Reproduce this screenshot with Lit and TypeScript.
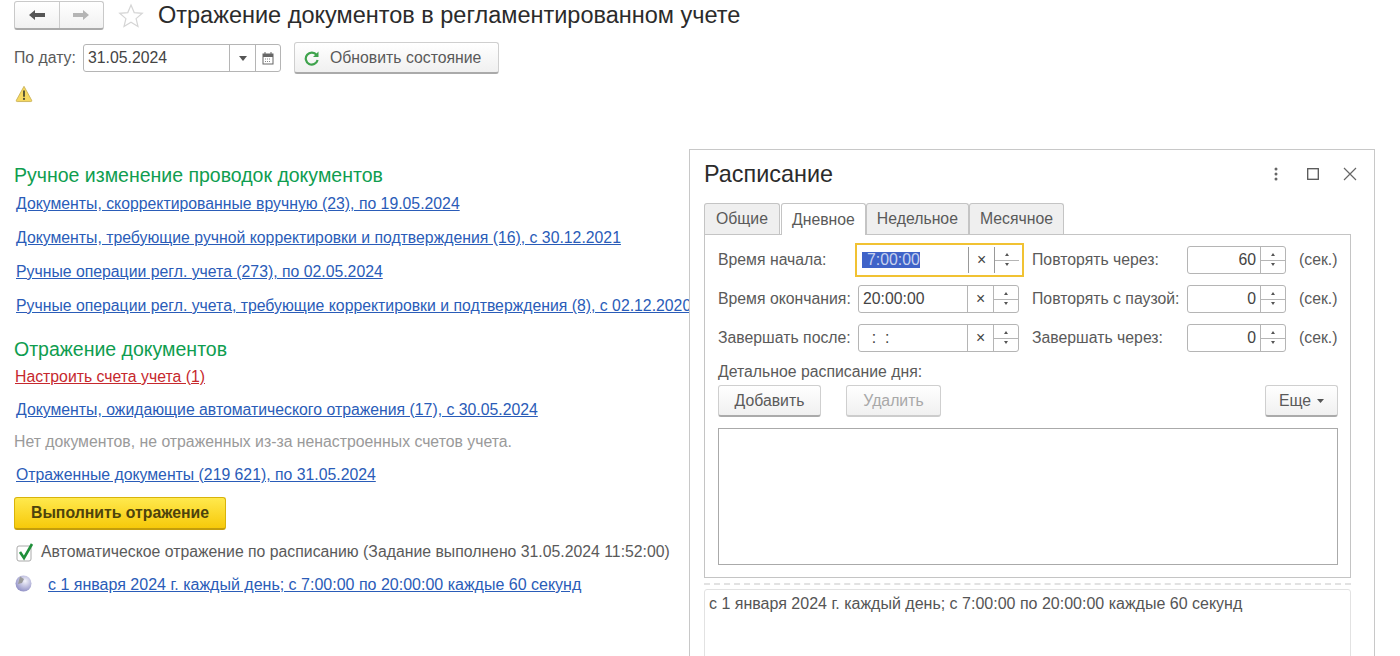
import { LitElement, html, css } from "lit";
import { customElement } from "lit/decorators.js";

const spin = html`<span class="spin"><svg width="8" height="7" viewBox="0 0 8 7"><path d="M4 1 6 4H2z" fill="#555"/></svg><svg width="8" height="7" viewBox="0 0 8 7"><path d="M2 3h4L4 6z" fill="#555"/></svg></span>`;

@customElement("app-root")
export class AppRoot extends LitElement {
  static styles = css`
    :host { display: block; position: relative; width: 1400px; height: 656px; overflow: hidden; background: #fff; font-family: "Liberation Sans", Arial, sans-serif; font-size: 15.8px; color: #5a5a5a; }
    * { box-sizing: border-box; }
    .page { padding: 1px 0 0 14px; display: flex; flex-direction: column; align-items: flex-start; white-space: nowrap; }
    .top { display: flex; align-items: center; height: 29px; }
    .nav { display: flex; width: 90px; height: 29px; border: 1px solid #c9c9c9; border-bottom: 2px solid #aaa; border-radius: 3px; background: linear-gradient(#fff, #f1f1f1); }
    .nav span { flex: 1; display: flex; align-items: center; justify-content: center; }
    .nav span + span { border-left: 1px solid #ccc; }
    .star { margin-left: 13px; display: flex; }
    h1 { margin: 0 0 0 13px; font-weight: 400; font-size: 23.5px; color: #2b2b2b; line-height: 29px; }
    .daterow { display: flex; align-items: center; margin-top: 13px; height: 30px; }
    .daterow label { width: 69px; }
    .input { display: flex; align-items: stretch; height: 28px; border: 1px solid #b5b5b5; border-radius: 3px; background: #fff; color: #444; }
    .date { width: 198px; }
    .date .val { flex: 1; padding-left: 4px; display: flex; align-items: center; }
    .cell { display: flex; align-items: center; justify-content: center; border-left: 1px solid #b5b5b5; }
    .c25 { width: 25px; }
    .c26 { width: 26px; }
    .btn { display: inline-flex; align-items: center; justify-content: center; height: 32px; border: 1px solid #cfcfcf; border-bottom: 2px solid #aaa; border-radius: 3px; background: linear-gradient(#fff, #f0f0f0); color: #5a5a5a; }
    .refresh { width: 205px; margin-left: 13px; gap: 10px; padding-left: 9px; justify-content: flex-start; }
    .warn { display: flex; margin: 12px 0 0 1px; height: 20px; }
    h2 { margin: 0; font-weight: 400; font-size: 19.5px; line-height: 22px; color: #0f9d4f; }
    .h1st { margin-top: 59px; }
    .h2nd { margin-top: 22px; }
    a { color: #2a5cb8; text-decoration: underline; display: block; line-height: 20px; margin-left: 2px; }
    .l1 { margin-top: 8px; }
    .l { margin-top: 14px; }
    .red { color: #c6282d; margin-top: 7px; margin-left: 1px; }
    .l2 { margin-top: 13px; }
    .none { color: #9a9a9a; line-height: 20px; margin-top: 12px; }
    .yellow { width: 212px; height: 33px; margin-top: 12px; background: linear-gradient(#ffe94d, #f7c90a); border: 1px solid #d8b30a; border-bottom: 2px solid #c49d0c; color: #4d430c; font-weight: 700; }
    .check { display: flex; align-items: center; margin: 12px 0 0 2px; gap: 6px; line-height: 20px; }
    .box { width: 19px; height: 19px; display: flex; }
    .sched { display: flex; align-items: center; margin: 13px 0 0 1px; gap: 16px; }
    .sched a { margin: 0; font-size: 16px; }
    .globe { margin-top: -4px; }
    .dlg { position: absolute; left: 689px; top: 149px; width: 686px; height: 520px; border: 1px solid #c8c8c8; background: #fff; padding: 0 24px 0 14px; }
    .head { display: flex; align-items: center; height: 47px; padding-top: 1px; margin-right: -18px; }
    .head .t { font-size: 23.4px; color: #2b2b2b; flex: 1; }
    .head .ic { display: flex; width: 37px; justify-content: center; }
    .tabs { display: flex; margin-top: 6px; height: 31px; align-items: flex-end; position: relative; z-index: 1; }
    .tab { height: 31px; padding: 0 10px; display: flex; align-items: center; background: #efefef; border: 1px solid #c4c4c4; border-bottom: none; border-radius: 3px 3px 0 0; color: #5a5a5a; }
    .tab:first-child { padding: 0 11px; }
    .tab.on { background: #fff; height: 32px; margin-bottom: -1px; margin-left: 1px; }
    .panel { height: 344px; width: 647px; border: 1px solid #c4c4c4; padding: 0 12px 0 13px; }
    .grid { display: grid; grid-template-columns: 140px 174px 155px 111px 40px; grid-template-rows: 39px 39px 39px; padding-top: 5px; align-items: center; height: 121px; }
    .grid > label { white-space: nowrap; }
    .unit { padding-left: 1px; }
    .time { width: 161px; height: 28px; }
    .time .val { flex: 1; padding-left: 4px; display: flex; align-items: center; }
    .focus { border: 2px solid #f1c232; width: 169px; height: 34px; margin-left: -3px; padding: 2px 3px 2px 0; background: #fff; display: flex; color: #444; }
    .focus .val { flex: 1; display: flex; align-items: center; padding-left: 5px; }
    .focus .val span { background: #3f63c8; color: #c8d2ee; padding: 0 0 0 5px; line-height: 16px; }
    .focus .cell { border-color: #999; }
    .num { width: 99px; height: 28px; }
    .num .val { flex: 1; display: flex; align-items: center; justify-content: flex-end; padding-right: 4px; }
    .spin { display: flex; flex-direction: column; width: 100%; height: 100%; justify-content: center; align-items: center; position: relative; gap: 1px; }
    .spin::after { content: ""; position: absolute; left: 0; right: 0; top: 50%; border-top: 1px solid #b5b5b5; }
    .detail { line-height: 20px; margin-top: 6px; }
    .bar { display: flex; margin-top: 3px; gap: 25px; }
    .add { width: 103px; }
    .del { width: 95px; color: #a8a8a8; border-bottom-color: #ccc; }
    .more { width: 73px; margin-left: auto; gap: 6px; }
    .list { height: 137px; margin-top: 11px; border: 1px solid #aaa; }
    .dash { width: 647px; border-top: 2px dashed #e2e2e2; margin-top: 5px; }
    .note { width: 647px; height: 120px; margin-top: 4px; border: 1px solid #e2e2e2; border-radius: 3px; padding: 4px; line-height: 20px; color: #555; font-size: 16px; }
  `;

  private time(v: string) {
    return html`<div class="input time"><div class="val">${v}</div><div class="cell c26">×</div><div class="cell c25">${spin}</div></div>`;
  }
  private num(v: string) {
    return html`<div class="input num"><div class="val">${v}</div><div class="cell c25">${spin}</div></div>`;
  }

  render() {
    return html`
      <div class="page">
        <div class="top">
          <div class="nav">
            <span><svg width="18" height="12" viewBox="0 0 18 12"><path d="M1 6 7 1v3h10v4H7v3z" fill="#555"/></svg></span>
            <span><svg width="18" height="12" viewBox="0 0 18 12"><path d="M17 6 11 1v3H1v4h10v3z" fill="#b5b5b5"/></svg></span>
          </div>
          <span class="star"><svg width="28" height="28" viewBox="0 0 28 28"><path d="M14 3l3.2 7.6 8.1.7-6.2 5.3 1.9 8-7-4.3-7 4.3 1.9-8-6.2-5.3 8.1-.7z" fill="none" stroke="#d5d5d5" stroke-width="1.2"/></svg></span>
          <h1>Отражение документов в регламентированном учете</h1>
        </div>
        <div class="daterow">
          <label>По дату:</label>
          <div class="input date">
            <div class="val">31.05.2024</div>
            <div class="cell c26"><svg width="8" height="5" viewBox="0 0 8 5"><path d="M0 0h8L4 5z" fill="#555"/></svg></div>
            <div class="cell c25"><svg width="12" height="13" viewBox="0 0 12 13"><rect x="1" y="2" width="10" height="10" fill="none" stroke="#666"/><rect x="1" y="2" width="10" height="3" fill="#666"/><path d="M3 0v3M9 0v3" stroke="#666"/><path d="M3 7h6M3 9.5h6" stroke="#888" stroke-dasharray="1 1"/></svg></div>
          </div>
          <div class="btn refresh">
            <svg width="16" height="16" viewBox="0 0 16 16"><path d="M12.6 5A6 6 0 1 0 13.6 10" fill="none" stroke="#3fa34d" stroke-width="2.2"/><path d="M14.5 1.5v5.5H9z" fill="#3fa34d"/></svg>
            <span>Обновить состояние</span>
          </div>
        </div>
        <div class="warn"><svg width="18" height="18" viewBox="0 0 20 20"><path d="M10 1.5 18.5 17a1 1 0 0 1-.9 1.4H2.400a1 1 0 0 1-.9-1.400z" fill="#f6d860" stroke="#c9b25a"/><path d="M10 6v7" stroke="#4a4a30" stroke-width="2"/><circle cx="10" cy="15.500" r="1.200" fill="#4a4a30"/></svg></div>
        <h2 class="h1st">Ручное изменение проводок документов</h2>
        <a class="l1">Документы, скорректированные вручную (23), по 19.05.2024</a>
        <a class="l">Документы, требующие ручной корректировки и подтверждения (16), с 30.12.2021</a>
        <a class="l">Ручные операции регл. учета (273), по 02.05.2024</a>
        <a class="l">Ручные операции регл. учета, требующие корректировки и подтверждения (8), с 02.12.2020</a>
        <h2 class="h2nd">Отражение документов</h2>
        <a class="red">Настроить счета учета (1)</a>
        <a class="l2">Документы, ожидающие автоматического отражения (17), с 30.05.2024</a>
        <div class="none">Нет документов, не отраженных из-за ненастроенных счетов учета.</div>
        <a class="l2">Отраженные документы (219 621), по 31.05.2024</a>
        <div class="btn yellow">Выполнить отражение</div>
        <div class="check">
          <span class="box"><svg width="19" height="19" viewBox="0 0 19 19"><rect x="1" y="3" width="14" height="15" rx="2" fill="#fff" stroke="#aaa"/><path d="M4 9l4 6 8-14" fill="none" stroke="#1f8f3a" stroke-width="2.600"/></svg></span>
          <span>Автоматическое отражение по расписанию (Задание выполнено 31.05.2024 11:52:00)</span>
        </div>
        <div class="sched">
          <svg class="globe" width="17" height="17" viewBox="0 0 17 17"><defs><radialGradient id="g" cx=".6" cy=".35" r=".7"><stop offset="0" stop-color="#f4f4fb"/><stop offset="1" stop-color="#8d8dc4"/></radialGradient></defs><circle cx="8.500" cy="8.500" r="8" fill="url(#g)"/><path d="M5 1.500 9 4 7 8 3 9z" fill="#9b9b9b"/></svg>
          <a>с 1 января 2024 г. каждый день; с 7:00:00 по 20:00:00 каждые 60 секунд</a>
        </div>
      </div>

      <div class="dlg">
        <div class="head">
          <div class="t">Расписание</div>
          <span class="ic"><svg width="4" height="14" viewBox="0 0 4 14"><g fill="#666"><circle cx="2" cy="2" r="1.500"/><circle cx="2" cy="7" r="1.500"/><circle cx="2" cy="12" r="1.500"/></g></svg></span>
          <span class="ic"><svg width="12" height="12" viewBox="0 0 12 12"><rect x=".7" y=".7" width="10.600" height="10.600" fill="none" stroke="#555" stroke-width="1.300"/></svg></span>
          <span class="ic"><svg width="14" height="14" viewBox="0 0 14 14"><path d="M1 1l12 12M13 1 1 13" stroke="#666" stroke-width="1.200"/></svg></span>
        </div>
        <div class="tabs">
          <div class="tab">Общие</div>
          <div class="tab on">Дневное</div>
          <div class="tab">Недельное</div>
          <div class="tab">Месячное</div>
        </div>
        <div class="panel">
          <div class="grid">
            <label>Время начала:</label>
            <div class="focus"><div class="val"><span>7:00:00</span></div><div class="cell c26">×</div><div class="cell c25">${spin}</div></div>
            <label>Повторять через:</label>${this.num("60")}<span class="unit">(сек.)</span>
            <label>Время окончания:</label>${this.time("20:00:00")}
            <label>Повторять с паузой:</label>${this.num("0")}<span class="unit">(сек.)</span>
            <label>Завершать после:</label>${this.time("\u00a0\u00a0:\u00a0\u00a0:")}
            <label>Завершать через:</label>${this.num("0")}<span class="unit">(сек.)</span>
          </div>
          <div class="detail">Детальное расписание дня:</div>
          <div class="bar">
            <div class="btn add">Добавить</div>
            <div class="btn del">Удалить</div>
            <div class="btn more">Еще <svg width="7" height="4" viewBox="0 0 7 4"><path d="M0 0h7L3.500 4z" fill="#555"/></svg></div>
          </div>
          <div class="list"></div>
        </div>
        <div class="dash"></div>
        <div class="note">с 1 января 2024 г. каждый день; с 7:00:00 по 20:00:00 каждые 60 секунд</div>
      </div>
    `;
  }
}
